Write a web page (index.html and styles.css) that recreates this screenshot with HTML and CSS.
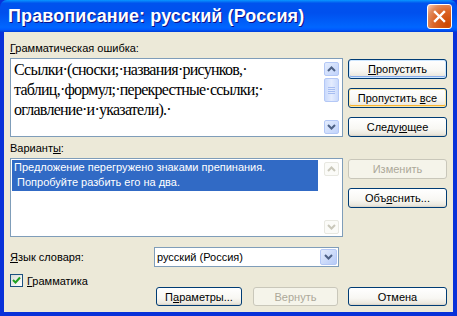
FILE: index.html
```html
<!DOCTYPE html>
<html lang="ru">
<head>
  <meta charset="UTF-8">
  <title>Правописание</title>
  <link rel="stylesheet" href="styles.css">
</head>
<body>
  <div class="window">
    <div class="titlebar">
      <span class="title">Правописание: русский (Россия)</span>
      <span class="close">
        <svg width="13" height="13" viewBox="0 0 13 13"><path d="M2 2 L11 11 M11 2 L2 11" stroke="#fff" stroke-width="2.4" stroke-linecap="square"/></svg>
      </span>
    </div>

    <div class="content">
      <!-- grammar error -->
      <div class="section">
        <div class="main">
          <div class="label"><u>Г</u>рамматическая ошибка:</div>
          <div class="box">
            <div class="sentence">Ссылки·(сноски;·названия·рисунков,·<br>таблиц,·формул;·перекрестные·ссылки;·<br>оглавление·и·указатели).·</div>
            <div class="scrollbar">
              <span class="sb-btn"><svg width="9" height="6" viewBox="0 0 9 6"><path d="M1 5 L4.5 1.5 L8 5" fill="none" stroke="#4d6185" stroke-width="2"/></svg></span>
              <span class="sb-thumb"><i></i><i></i><i></i><i></i></span>
              <span class="sb-track"></span>
              <span class="sb-btn"><svg width="9" height="6" viewBox="0 0 9 6"><path d="M1 1 L4.5 4.5 L8 1" fill="none" stroke="#4d6185" stroke-width="2"/></svg></span>
            </div>
          </div>
        </div>
        <div class="actions">
          <button class="btn default"><u>П</u>ропустить</button>
          <button class="btn hover">Пропустить <u>в</u>се</button>
          <button class="btn">Следу<u>ю</u>щее</button>
        </div>
      </div>

      <!-- suggestions -->
      <div class="section second">
        <div class="main">
          <div class="label">Вариант<u>ы</u>:</div>
          <div class="box">
            <div class="list">
              <div class="selected">Предложение перегружено знаками препинания.<br>&nbsp;Попробуйте разбить его на два.</div>
            </div>
            <div class="scrollbar off">
              <span class="sb-btn"><svg width="9" height="6" viewBox="0 0 9 6"><path d="M1 5 L4.5 1.5 L8 5" fill="none" stroke="#c9c7ba" stroke-width="2"/></svg></span>
              <span class="sb-track"></span>
              <span class="sb-btn"><svg width="9" height="6" viewBox="0 0 9 6"><path d="M1 1 L4.5 4.5 L8 1" fill="none" stroke="#c9c7ba" stroke-width="2"/></svg></span>
            </div>
          </div>
        </div>
        <div class="actions">
          <button class="btn" disabled>Изменить</button>
          <button class="btn">Объ<u>я</u>снить...</button>
        </div>
      </div>

      <!-- dictionary -->
      <div class="lang-row">
        <span class="lang-label"><u>Я</u>зык словаря:</span>
        <div class="combo">
          <span class="combo-text">русский (Россия)</span>
          <span class="combo-btn"><svg width="9" height="6" viewBox="0 0 9 6"><path d="M1 1 L4.5 4.5 L8 1" fill="none" stroke="#4d6185" stroke-width="2"/></svg></span>
        </div>
      </div>

      <div class="check-row">
        <span class="checkbox"><svg width="9" height="9" viewBox="0 0 9 9"><path d="M1 4 L3.5 6.5 L8 1.5" fill="none" stroke="#21a121" stroke-width="2"/></svg></span>
        <span><u>Г</u>рамматика</span>
      </div>

      <div class="bottom-row">
        <button class="btn params">П<u>а</u>раметры...</button>
        <button class="btn undo" disabled>Вернуть</button>
        <button class="btn cancel">Отмена</button>
      </div>
    </div>
  </div>
</body>
</html>
```

FILE: styles.css
```css
body {
  margin: 0;
  font-family: "Liberation Sans", Arial, sans-serif;
  font-size: 11px;
  color: #000;
}

.window {
  width: 457px;
  height: 316px;
  display: flex;
  flex-direction: column;
  background: #0831d9;
}

/* title bar */
.titlebar {
  height: 32px;
  display: flex;
  align-items: center;
  justify-content: space-between;
  padding: 0 5px 0 8px;
  background: linear-gradient(#0997ff 0%, #0053ee 10%, #0050ee 40%, #0066ff 85%, #005bff 92%, #003dd7 100%);
  border-radius: 7px 7px 0 0;
}

.title {
  color: #fff;
  font-weight: bold;
  font-size: 18px;
  text-shadow: 1px 1px #0f1089;
  letter-spacing: 0.1px;
}

.close {
  width: 23px;
  height: 23px;
  display: flex;
  align-items: center;
  justify-content: center;
  border: 1px solid #fff;
  border-radius: 3px;
  background: radial-gradient(circle at 85% 85%, #cc4600 0%, #dc6527 50%, #e08a5c 75%, #ffccb2 100%);
}

/* dialog body */
.content {
  flex: 1;
  background: #ece9d8;
  border: 4px solid #0831d9;
  border-top: 0;
  padding: 9px 6px 0 6px;
  display: flex;
  flex-direction: column;
}

.section {
  display: flex;
  gap: 5px;
}

.section.second {
  margin-top: 4px;
}

.main {
  width: 333px;
}

.label {
  line-height: 14px;
  margin-bottom: 3px;
}

.box {
  height: 79px;
  box-sizing: border-box;
  border: 1px solid #7f9db9;
  background: #fff;
  display: flex;
}

.sentence {
  flex: 1;
  font-family: "Liberation Serif", "Times New Roman", serif;
  font-size: 16px;
  letter-spacing: -0.75px;
  line-height: 20px;
  padding: 1px 0 0 3px;
  white-space: nowrap;
}

.list {
  flex: 1;
  padding: 1px 0 0 1px;
}

.selected {
  background: #316ac5;
  color: #fff;
  width: 304px;
  line-height: 15px;
  padding: 0 0 1px 2px;
  white-space: nowrap;
}

/* scroll bars */
.scrollbar {
  width: 15px;
  margin: 3px 3px 2px 0;
  display: flex;
  flex-direction: column;
  gap: 2px;
}

.sb-btn {
  height: 14px;
  box-sizing: border-box;
  border: 1px solid #b4c8f6;
  border-radius: 2px;
  background: linear-gradient(135deg, #e3ecfd, #c1d3fb);
  display: flex;
  align-items: center;
  justify-content: center;
}

.sb-thumb {
  height: 24px;
  box-sizing: border-box;
  border: 1px solid #b4c8f6;
  border-radius: 2px;
  background: linear-gradient(90deg, #cadafc, #e4ecfe, #cadafc);
  display: flex;
  flex-direction: column;
  justify-content: center;
  gap: 1px;
  padding: 0 3px;
}

.sb-thumb i {
  display: block;
  height: 1px;
  background: #a6bdf1;
}

.sb-track {
  flex: 1;
}

.scrollbar.off .sb-btn {
  border-color: #e8e8e1;
  background: #fbfbf8;
}

/* buttons */
.actions {
  width: 99px;
  margin-top: 18px;
  display: flex;
  flex-direction: column;
  gap: 9px;
}

.btn {
  height: 20px;
  box-sizing: border-box;
  padding: 0;
  font-family: "Liberation Sans", Arial, sans-serif;
  font-size: 11px;
  color: #000;
  border: 1px solid #003c74;
  border-radius: 3px;
  background: linear-gradient(#ffffff 0%, #f8f7f3 60%, #ebe8de 90%, #d6d0c5 100%);
}

.btn.default {
  box-shadow: inset 0 0 0 1px #cee7ff, inset 0 -1px 0 1px #89adeb;
}

.btn.hover {
  box-shadow: inset 0 0 0 1px #fce7a8, inset 0 -1px 0 1px #f8b330;
}

.btn:disabled {
  color: #aca899;
  border-color: #c9c7ba;
  background: #f5f4ea;
}

/* dictionary row */
.lang-row {
  margin-top: 10px;
  display: flex;
  align-items: center;
}

.lang-label {
  width: 144px;
}

.combo {
  width: 185px;
  height: 20px;
  box-sizing: border-box;
  border: 1px solid #7f9db9;
  background: #fff;
  display: flex;
  align-items: center;
  justify-content: space-between;
  padding: 0 1px 0 2px;
}

.combo-btn {
  width: 17px;
  height: 16px;
  box-sizing: border-box;
  border: 1px solid #b4c8f6;
  border-radius: 2px;
  background: linear-gradient(135deg, #e3ecfd, #b7cbf7);
  display: flex;
  align-items: center;
  justify-content: center;
}

.check-row {
  margin-top: 7px;
  display: flex;
  align-items: center;
  gap: 4px;
  height: 13px;
}

.checkbox {
  width: 13px;
  height: 13px;
  box-sizing: border-box;
  border: 1px solid #1c5180;
  background: linear-gradient(135deg, #dcdcd7, #ffffff);
  display: flex;
  align-items: center;
  justify-content: center;
}

.bottom-row {
  display: flex;
  justify-content: flex-end;
}

.bottom-row .btn {
  height: 19px;
}

.params {
  width: 86px;
}

.undo {
  width: 85px;
  margin-left: 11px;
}

.cancel {
  width: 99px;
  margin-left: 10px;
}
```
